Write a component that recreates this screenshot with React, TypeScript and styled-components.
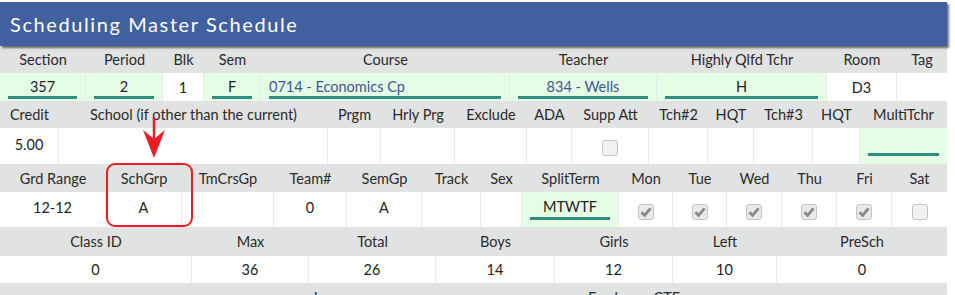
import React from "react";
import styled, { createGlobalStyle } from "styled-components";

const Global = createGlobalStyle`
  html, body { margin: 0; padding: 0; background: #fff; }
  body { font-family: Lato, "Liberation Sans", sans-serif; color: #222; }
  * { box-sizing: border-box; }
`;

const Page = styled.div`
  position: relative;
  width: 947px;
  padding-top: 2px;
`;

const TitleBar = styled.div`
  height: 44px;
  background: #4060a0;
  box-shadow: 2px 2px 2px rgba(0, 0, 0, 0.55);
  display: flex;
  align-items: center;
  padding-left: 10px;
  color: #fff;
  font-size: 20px;
  letter-spacing: 1.6px;
  position: relative;
  z-index: 1;
`;

const Grid = styled.div<{ $cols: string; $h: number }>`
  display: grid;
  grid-template-columns: ${(p) => p.$cols};
  height: ${(p) => p.$h}px;
`;

const HeadRow = styled(Grid)`
  background: #e1e3e3;
`;

const HeadCell = styled.div`
  display: flex;
  align-items: center;
  justify-content: center;
  font-size: 14.5px;
  color: #2a2a2a;
  white-space: nowrap;
`;

const DataCell = styled.div<{ $green?: boolean; $pb?: number }>`
  display: flex;
  align-items: center;
  justify-content: center;
  padding: 0 8px ${(p) => p.$pb ?? 0}px 8px;
  background: ${(p) => (p.$green ? "#e5fde4" : "#fff")};
  border-right: 1px solid #e7ebee;
  font-size: 14.5px;
  color: #222;
  white-space: nowrap;
  &:last-child { border-right: none; }
`;

const Input = styled.div<{ $left?: boolean; $blue?: boolean }>`
  width: 100%;
  height: 24px;
  border-bottom: 3px solid #2f8e7f;
  display: flex;
  align-items: center;
  justify-content: ${(p) => (p.$left ? "flex-start" : "center")};
  color: ${(p) => (p.$blue ? "#3a5793" : "#222")};
  font-size: 14.5px;
  padding-top: 1px;
`;

const Box = styled.div<{ $checked?: boolean }>`
  width: 16px;
  height: 16px;
  margin-top: 4px;
  border: 1px solid #c4c4c4;
  border-radius: 3px;
  background: ${(p) => (p.$checked ? "#e9e9e9" : "#f1f1f1")};
  display: flex;
  align-items: center;
  justify-content: center;
`;

const Highlight = styled.div`
  position: absolute;
  left: 106px;
  top: 163px;
  width: 87px;
  height: 64px;
  border: 2px solid #ec1c24;
  border-radius: 9px;
  pointer-events: none;
`;

const Arrow = styled.svg`
  position: absolute;
  left: 140px;
  top: 114px;
  width: 28px;
  height: 46px;
  overflow: visible;
`;

const Check = ({ checked }: { checked?: boolean }) => (
  <Box $checked={checked}>
    {checked && (
      <svg width="12" height="12" viewBox="0 0 12 12">
        <path d="M1.5 6.3 L4.6 9.4 L10.5 2.3" fill="none" stroke="#8a8a8a" strokeWidth="2.8" strokeLinejoin="miter" />
      </svg>
    )}
  </Box>
);

type Cell = { t?: string; green?: boolean; input?: boolean; left?: boolean; blue?: boolean; check?: "on" | "off" };

const Section = ({
  cols,
  heads,
  cells,
  hh,
  dh,
  pb = 0,
}: {
  cols: string;
  heads: string[];
  cells: Cell[];
  hh: number;
  dh: number;
  pb?: number;
}) => (
  <>
    <HeadRow $cols={cols} $h={hh}>
      {heads.map((h, i) => (
        <HeadCell key={i}>{h}</HeadCell>
      ))}
    </HeadRow>
    <Grid $cols={cols} $h={dh}>
      {cells.map((c, i) => (
        <DataCell key={i} $green={c.green} $pb={c.check ? 0 : pb}>
          {c.check ? (
            <Check checked={c.check === "on"} />
          ) : c.input ? (
            <Input $left={c.left} $blue={c.blue}>{c.t}</Input>
          ) : (
            c.t
          )}
        </DataCell>
      ))}
    </Grid>
  </>
);

const px = (a: number[]) => a.map((n) => n + "px").join(" ");

export default function App() {
  return (
    <Page>
      <Global />
      <TitleBar>Scheduling Master Schedule</TitleBar>
      <Section
        cols={px([86, 77, 41, 57, 249, 147, 170, 70, 50])}
        hh={27}
        dh={28}
        heads={["Section", "Period", "Blk", "Sem", "Course", "Teacher", "Highly Qlfd Tchr", "Room", "Tag"]}
        cells={[
          { t: "357", green: true, input: true },
          { t: "2", green: true, input: true },
          { t: "1" },
          { t: "F", green: true, input: true },
          { t: "0714 - Economics Cp", green: true, input: true, left: true, blue: true },
          { t: "834 - Wells", green: true, input: true, blue: true },
          { t: "H", green: true, input: true },
          { t: "D3" },
          { t: "" },
        ]}
      />
      <Section
        cols={px([59, 269, 53, 74, 72, 45, 77, 59, 46, 59, 47, 87])}
        hh={27}
        dh={36}
        pb={4}
        heads={["Credit", "School (if other than the current)", "Prgm", "Hrly Prg", "Exclude", "ADA", "Supp Att", "Tch#2", "HQT", "Tch#3", "HQT", "MultiTchr"]}
        cells={[
          { t: "5.00" },
          {},
          {},
          {},
          {},
          {},
          { check: "off" },
          {},
          {},
          {},
          {},
          { green: true, input: true, t: "" },
        ]}
      />
      <Section
        cols={px([106, 76, 92, 73, 75, 59, 41, 97, 54, 54, 55, 55, 55, 55])}
        hh={28}
        dh={35}
        pb={4}
        heads={["Grd Range", "SchGrp", "TmCrsGp", "Team#", "SemGp", "Track", "Sex", "SplitTerm", "Mon", "Tue", "Wed", "Thu", "Fri", "Sat"]}
        cells={[
          { t: "12-12" },
          { t: "A" },
          {},
          { t: "0" },
          { t: "A" },
          {},
          {},
          { t: "MTWTF", green: true, input: true },
          { check: "on" },
          { check: "on" },
          { check: "on" },
          { check: "on" },
          { check: "on" },
          { check: "off" },
        ]}
      />
      <Section
        cols={px([192, 117, 127, 119, 118, 104, 170])}
        hh={29}
        dh={27}
        heads={["Class ID", "Max", "Total", "Boys", "Girls", "Left", "PreSch"]}
        cells={[{ t: "0" }, { t: "36" }, { t: "26" }, { t: "14" }, { t: "12" }, { t: "10" }, { t: "0" }]}
      />
      <HeadRow $cols={px([250, 188, 122, 148, 239])} $h={28}>
        <HeadCell />
        <HeadCell>Language</HeadCell>
        <HeadCell />
        <HeadCell>Freshman CTE</HeadCell>
        <HeadCell />
      </HeadRow>
      <Highlight />
      <Arrow viewBox="0 0 28 46">
        <line x1="14" y1="3" x2="14" y2="28" stroke="#ec1c24" strokeWidth="2.5" />
        <polygon points="3,16 14,25 25,16 14,44" fill="#ec1c24" />
      </Arrow>
    </Page>
  );
}
